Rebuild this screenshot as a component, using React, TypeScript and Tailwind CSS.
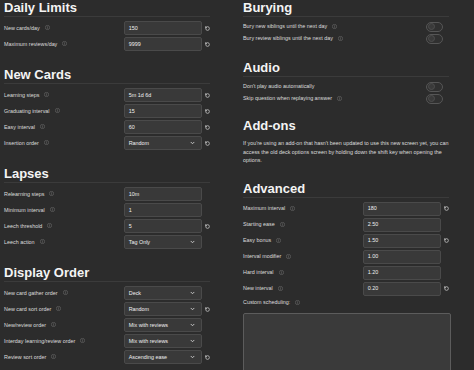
import React from "react";

const Info = () => (
  <svg width="5" height="5" viewBox="0 0 10 10" className="ml-[5px] shrink-0">
    <circle cx="5" cy="5" r="4.3" stroke="#7a7a7a" strokeWidth="1" fill="none" />
    <line x1="5" y1="4.3" x2="5" y2="7.4" stroke="#7a7a7a" strokeWidth="1" />
    <circle cx="5" cy="2.8" r="0.65" fill="#7a7a7a" />
  </svg>
);

const Reset = () => (
  <svg width="5" height="5" viewBox="0 0 24 24" fill="none" stroke="#cfcfcf" strokeWidth="3.4" strokeLinecap="round" strokeLinejoin="round">
    <path d="M3 12a9 9 0 1 0 9-9 9.75 9.75 0 0 0-6.74 2.74L3 8" />
    <path d="M3 3v5h5" />
  </svg>
);

const Chevron = () => (
  <svg width="5" height="4" viewBox="0 0 10 8" fill="none" stroke="#d0d0d0" strokeWidth="1.8" strokeLinecap="round" strokeLinejoin="round">
    <path d="M2 2.5l3 3 3-3" />
  </svg>
);

type RowProps = { label: string; value: string; select?: boolean; reset?: boolean };

const Row = ({ label, value, select, reset }: RowProps) => (
  <div className="flex h-[14px] items-center">
    <div className="flex w-[121px] items-center text-[5.4px] text-[#dcdcdc]">
      {label}
      <Info />
    </div>
    <div className="flex h-[14px] w-[79px] items-center justify-between rounded-[2px] border border-[#4a4a4a] bg-[#393939] pl-[4px] pr-[6px] text-[5.4px] text-[#f0f0f0]">
      <span>{value}</span>
      {select && <Chevron />}
    </div>
    <div className="flex w-[8px] items-center pl-[3px]">{reset && <Reset />}</div>
  </div>
);

const Toggle = () => (
  <div className="flex h-[10px] w-[17px] items-center rounded-full border border-[#565656] bg-[#303030] px-[1px]">
    <div className="h-[7px] w-[7px] rounded-full border border-[#4e4e4e] bg-[#3a3a3a]" />
  </div>
);

const ToggleRow = ({ label, info = true }: { label: string; info?: boolean }) => (
  <div className="flex h-[11px] w-[200px] items-center justify-between">
    <div className="flex items-center text-[5.4px] text-[#dcdcdc]">
      {label}
      {info && <Info />}
    </div>
    <Toggle />
  </div>
);

const Heading = ({ children, line = true }: { children: React.ReactNode; line?: boolean }) => (
  <div
    className={
      line
        ? "h-[17px] border-b border-[#3b3b3b] text-[13px] font-bold leading-[16px] text-[#f4f4f4]"
        : "h-[16px] text-[13px] font-bold leading-[16px] text-[#f4f4f4]"
    }
  >
    {children}
  </div>
);

const Rows = ({ children }: { children: React.ReactNode }) => (
  <div className="mt-[4px] flex flex-col gap-[2px]">{children}</div>
);

export default function App() {
  return (
    <div className="min-h-screen w-full overflow-hidden bg-[#2c2c2c] font-['Liberation_Sans',Arial,sans-serif]">
      <div className="flex gap-[33px] pl-[4px]">
        <div className="flex w-[206px] flex-col">
          <Heading>Daily Limits</Heading>
          <Rows>
            <Row label="New cards/day" value="150" reset />
            <Row label="Maximum reviews/day" value="9999" reset />
          </Rows>

          <div className="mt-[16px]">
            <Heading>New Cards</Heading>
          </div>
          <Rows>
            <Row label="Learning steps" value="5m 1d 6d" reset />
            <Row label="Graduating interval" value="15" reset />
            <Row label="Easy interval" value="60" reset />
            <Row label="Insertion order" value="Random" select reset />
          </Rows>

          <div className="mt-[16px]">
            <Heading>Lapses</Heading>
          </div>
          <Rows>
            <Row label="Relearning steps" value="10m" />
            <Row label="Minimum interval" value="1" />
            <Row label="Leech threshold" value="5" reset />
            <Row label="Leech action" value="Tag Only" select />
          </Rows>

          <div className="mt-[16px]">
            <Heading>Display Order</Heading>
          </div>
          <Rows>
            <Row label="New card gather order" value="Deck" select />
            <Row label="New card sort order" value="Random" select reset />
            <Row label="New/review order" value="Mix with reviews" select />
            <Row label="Interday learning/review order" value="Mix with reviews" select />
            <Row label="Review sort order" value="Ascending ease" select reset />
          </Rows>
        </div>

        <div className="flex w-[206px] flex-col">
          <Heading>Burying</Heading>
          <div className="mt-[4px] flex flex-col gap-[1px]">
            <ToggleRow label="Bury new siblings until the next day" />
            <ToggleRow label="Bury review siblings until the next day" />
          </div>

          <div className="mt-[16px]">
            <Heading>Audio</Heading>
          </div>
          <div className="mt-[4px] flex flex-col gap-[1px]">
            <ToggleRow label="Don't play audio automatically" info={false} />
            <ToggleRow label="Skip question when replaying answer" />
          </div>

          <div className="mt-[14px]">
            <Heading line={false}>Add-ons</Heading>
          </div>
          <p className="mt-[5px] w-[208px] text-[5.4px] leading-[8.5px] text-[#dcdcdc]">
            If you're using an add-on that hasn't been updated to use this new screen yet, you can
            <br />
            access the old deck options screen by holding down the shift key when opening the
            <br />
            options.
          </p>

          <div className="mt-[16px]">
            <Heading>Advanced</Heading>
          </div>
          <Rows>
            <Row label="Maximum interval" value="180" reset />
            <Row label="Starting ease" value="2.50" />
            <Row label="Easy bonus" value="1.50" reset />
            <Row label="Interval modifier" value="1.00" />
            <Row label="Hard interval" value="1.20" />
            <Row label="New interval" value="0.20" reset />
          </Rows>
          <div className="mt-[1px] flex h-[11px] items-center text-[5.4px] text-[#dcdcdc]">
            Custom scheduling:
            <Info />
          </div>
          <div className="mt-[5px] h-[70px] w-[208px] rounded-[2px] border border-[#5c5c5c] bg-[#3a3a3a]" />
        </div>
      </div>
    </div>
  );
}
